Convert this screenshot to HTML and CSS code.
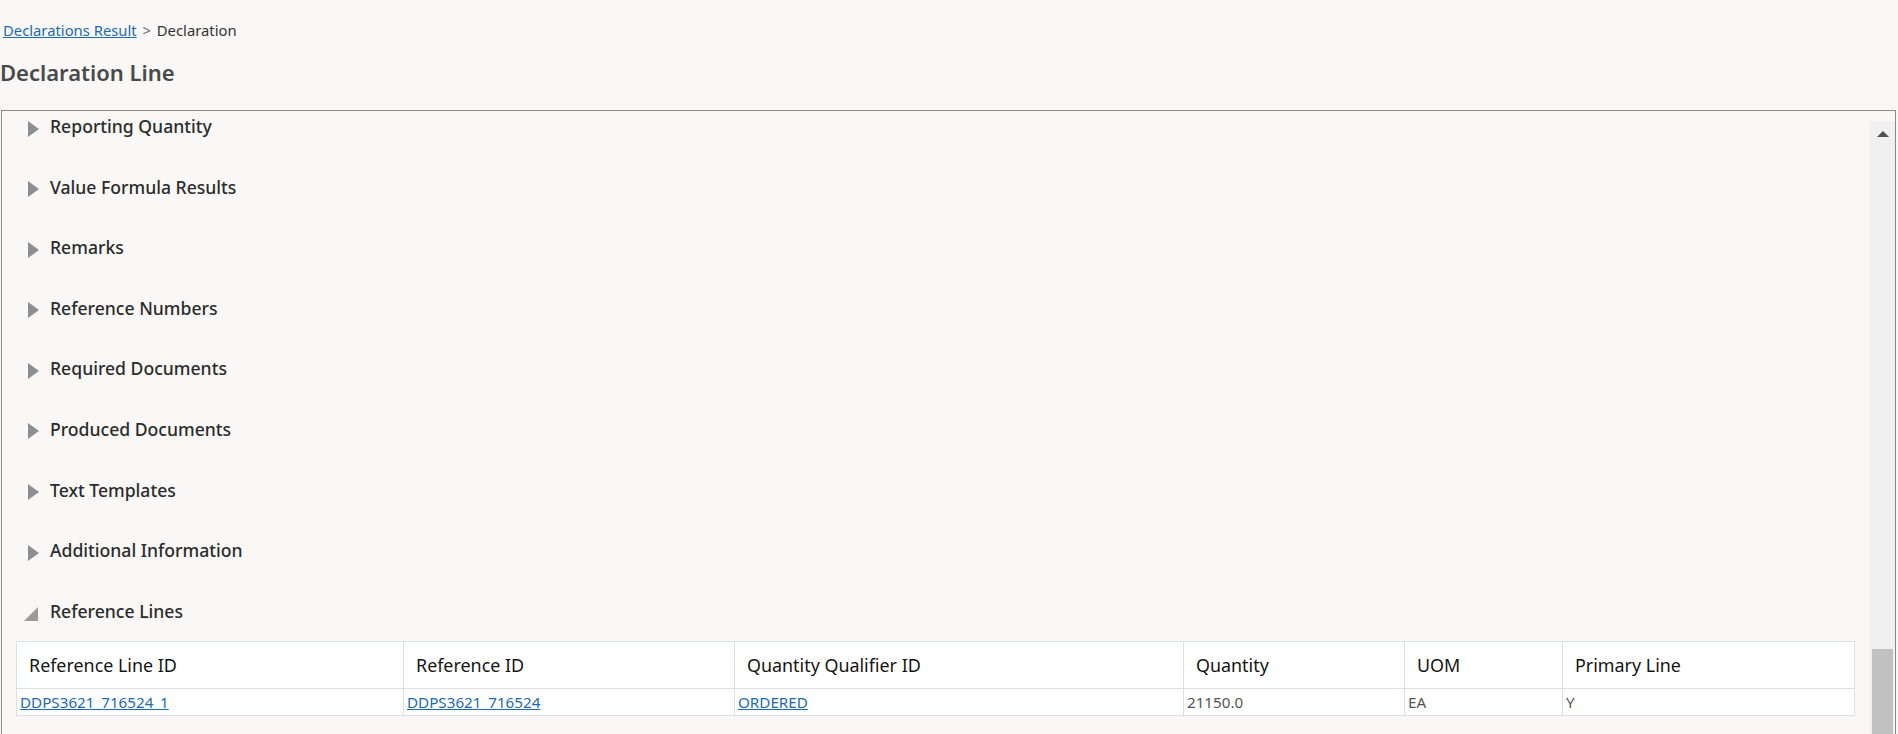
FILE: index.html
```html
<!DOCTYPE html>
<html lang="en">
<head>
<meta charset="utf-8">
<title>Declaration Line</title>
<link rel="stylesheet" href="styles.css">
</head>
<body>
<nav class="breadcrumb">
  <a href="#" class="crumb-link">Declarations Result</a>
  <span class="crumb-sep">&gt;</span>
  <span class="crumb-current">Declaration</span>
</nav>
<h1 class="page-title">Declaration Line</h1>
<div class="panel">
  <div class="viewport">
    <div class="sections">
      <div class="section"><span class="tri-right"></span><span class="section-title">Reporting Quantity</span></div>
      <div class="section"><span class="tri-right"></span><span class="section-title">Value Formula Results</span></div>
      <div class="section"><span class="tri-right"></span><span class="section-title">Remarks</span></div>
      <div class="section"><span class="tri-right"></span><span class="section-title">Reference Numbers</span></div>
      <div class="section"><span class="tri-right"></span><span class="section-title">Required Documents</span></div>
      <div class="section"><span class="tri-right"></span><span class="section-title">Produced Documents</span></div>
      <div class="section"><span class="tri-right"></span><span class="section-title">Text Templates</span></div>
      <div class="section"><span class="tri-right"></span><span class="section-title">Additional Information</span></div>
      <div class="section"><span class="tri-down"></span><span class="section-title">Reference Lines</span></div>
      <table class="ref-table">
        <colgroup>
          <col class="c1"><col class="c2"><col class="c3"><col class="c4"><col class="c5"><col class="c6">
        </colgroup>
        <thead>
          <tr>
            <th>Reference Line ID</th>
            <th>Reference ID</th>
            <th>Quantity Qualifier ID</th>
            <th>Quantity</th>
            <th>UOM</th>
            <th>Primary Line</th>
          </tr>
        </thead>
        <tbody>
          <tr>
            <td><a href="#">DDPS3621_716524_1</a></td>
            <td><a href="#">DDPS3621_716524</a></td>
            <td><a href="#">ORDERED</a></td>
            <td>21150.0</td>
            <td>EA</td>
            <td>Y</td>
          </tr>
        </tbody>
      </table>
    </div>
  </div>
  <div class="scrollbar">
    <span class="scroll-up"></span>
    <span class="scroll-space"></span>
    <span class="scroll-thumb"></span>
  </div>
</div>
</body>
</html>
```

FILE: styles.css
```css
html, body {
  margin: 0;
  padding: 0;
  height: 100%;
  overflow: hidden;
}
body {
  background: #f9f8f6;
  font-family: "Noto Sans", "Open Sans", sans-serif;
  color: #2b2b2b;
}
.breadcrumb {
  padding: 20px 0 0 3px;
  font-size: 14.8px;
  line-height: 20px;
  height: 20px;
  color: #333;
}
.crumb-link {
  color: #1d6ab2;
  text-decoration: underline;
}
.crumb-sep {
  margin: 0 2px;
  color: #666;
}
.page-title {
  margin: 17px 0 0 0;
  font-size: 22px;
  line-height: 30px;
  font-weight: 600;
  color: #4a4a4a;
}
.panel {
  margin: 23px 2px 0 1px;
  border: 1px solid #8a8a8a;
  display: flex;
  height: 700px;
  background: #f9f8f6;
}
.viewport {
  flex: 1;
  overflow: hidden;
}
.sections {
  margin-top: -15.3px;
  display: flex;
  flex-direction: column;
}
.section {
  height: 60.6px;
  display: flex;
  align-items: center;
  padding-left: 25px;
  flex-shrink: 0;
}
.section-title {
  font-size: 17.6px;
  font-weight: 500;
  color: #2b2b2b;
  margin-left: 11px;
}
.tri-right {
  width: 0;
  height: 0;
  border-top: 8px solid transparent;
  border-bottom: 8px solid transparent;
  border-left: 11px solid #8b8e92;
  margin-top: 5px;
  margin-left: 1px;
}
.tri-down {
  width: 0;
  height: 0;
  border-left: 14px solid transparent;
  border-bottom: 14px solid #9a9a9a;
  margin-top: 6px;
  margin-left: -3px;
  margin-right: 1px;
}
.ref-table {
  margin: 0 15px 0 14px;
  border-collapse: collapse;
  background: #fff;
  table-layout: fixed;
  width: calc(100% - 29px);
  flex-shrink: 0;
}
.c1 { width: 387px; }
.c2 { width: 331px; }
.c3 { width: 449px; }
.c4 { width: 221px; }
.c5 { width: 158px; }
.c6 { width: auto; }
.ref-table th,
.ref-table td {
  border: 1px solid #d8e0e8;
  text-align: left;
  white-space: nowrap;
}
.ref-table th {
  height: 46px;
  padding: 0 12px;
  font-size: 17.9px;
  font-weight: 400;
  color: #161513;
}
.ref-table td {
  height: 26px;
  padding: 0 3px;
  font-size: 15.2px;
  color: #555;
}
.ref-table td a {
  color: #1d6ab2;
  text-decoration: underline;
}
.scrollbar {
  width: 25px;
  flex-shrink: 0;
  margin-top: 10px;
  background: #f0f0f0;
  display: flex;
  flex-direction: column;
  align-items: center;
  overflow: hidden;
}
.scroll-up {
  flex-shrink: 0;
  width: 0;
  height: 0;
  border-left: 6px solid transparent;
  border-right: 6px solid transparent;
  border-bottom: 6px solid #505050;
  margin-top: 10px;
}
.scroll-space {
  flex-shrink: 0;
  height: 512px;
}
.scroll-thumb {
  flex-shrink: 0;
  width: 21px;
  height: 200px;
  background: #c1c1c1;
}
```
